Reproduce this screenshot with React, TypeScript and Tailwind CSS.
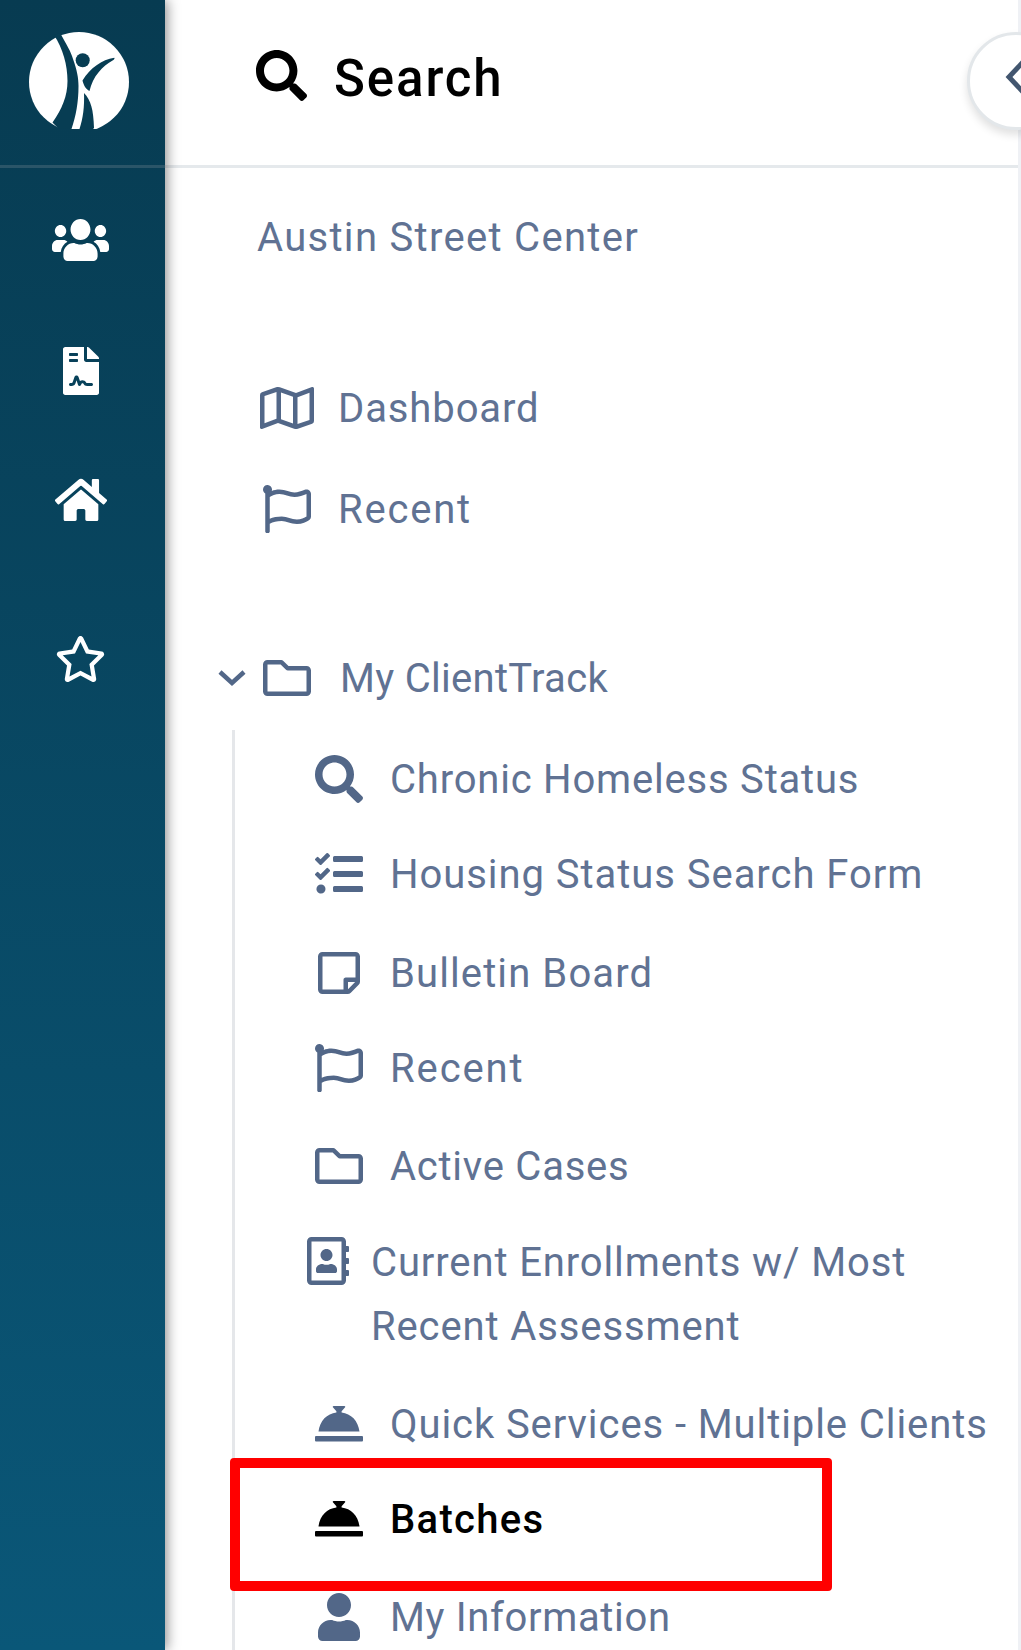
import type { ComponentType } from 'react'
import {
  FaFileContract,
  FaHome,
  FaRegAddressBook,
  FaRegFlag,
  FaRegFolder,
  FaRegMap,
  FaRegStar,
  FaRegStickyNote,
  FaSearch,
  FaTasks,
  FaUser,
  FaUsers,
} from 'react-icons/fa'

type IconProps = { className?: string }

type NavItem = {
  label: string
  icon: ComponentType<IconProps>
  iconClass: string
  gap: string
  textClass: string
  active?: boolean
}

function Bell({ className }: IconProps) {
  return (
    <svg className={className} viewBox="0 0 48 36" fill="currentColor">
      <path d="M18.5 0h11a.8.8 0 0 1 .6 1.3L26.6 5.2v1.2C36 7.5 43.2 14.5 44.5 25.5h-41C4.8 14.5 12 7.5 21.4 6.4V5.2L17.9 1.3a.8.8 0 0 1 .6-1.3z" />
      <rect x="0" y="30" width="48" height="5.5" rx="1" />
    </svg>
  )
}

function Logo() {
  return (
    <svg className="h-[97px] w-[100px]" viewBox="0 0 100 97">
      <circle cx="50" cy="50" r="50" fill="#fff" />
      <g fill="#073d53">
        <path d="M25 3L31 1C38 13 42 20 44 27C48 38 49.5 46 49.5 54C49.5 70 47 84 42.5 97L30 97L23.5 90.5C33 77 38.5 64 38.5 49C38.5 33 34 17 25 3Z" />
        <circle cx="53.7" cy="28.3" r="7" />
        <path d="M53.5 48.5C61 36 73 27.5 85.3 25.7C86 26.5 85 27.5 84 28.2C73 34.5 64 44 60.5 59C57 57.5 54.5 53 53.5 48.5Z" />
        <path d="M55 61C62 68 64.5 78 65 96L64 97H50.5C54 86 55.5 75 55 61Z" />
      </g>
    </svg>
  )
}

const topItems: NavItem[] = [
  { label: 'Dashboard', icon: FaRegMap, iconClass: 'w-[54px]', gap: '', textClass: 'tracking-[0.9px]' },
  { label: 'Recent', icon: FaRegFlag, iconClass: 'w-12', gap: 'mt-[37px]', textClass: 'tracking-[1.8px]' },
]

const treeItems: NavItem[] = [
  { label: 'Chronic Homeless Status', icon: FaSearch, iconClass: 'w-12', gap: 'mt-[18px]', textClass: 'tracking-[0.8px]' },
  { label: 'Housing Status Search Form', icon: FaTasks, iconClass: 'w-12', gap: 'mt-[31px]', textClass: 'tracking-[0.95px]' },
  { label: 'Bulletin Board', icon: FaRegStickyNote, iconClass: 'w-[42px]', gap: 'mt-[35px]', textClass: 'tracking-[1.1px]' },
  { label: 'Recent', icon: FaRegFlag, iconClass: 'w-12', gap: 'mt-[31px]', textClass: 'tracking-[1.9px]' },
  { label: 'Active Cases', icon: FaRegFolder, iconClass: 'w-12', gap: 'mt-[34px]', textClass: 'tracking-[0.75px]' },
]

const serviceItems: NavItem[] = [
  { label: 'Quick Services - Multiple Clients', icon: Bell, iconClass: 'w-12', gap: 'mt-[34px]', textClass: 'tracking-[0.92px]' },
  { label: 'Batches', icon: Bell, iconClass: 'w-12', gap: 'mt-[31px]', textClass: 'tracking-[1.3px]', active: true },
  { label: 'My Information', icon: FaUser, iconClass: 'w-[42px]', gap: 'mt-[34px]', textClass: 'tracking-[0.65px]' },
]

function NavRow({ item }: { item: NavItem }) {
  const Icon = item.icon
  return (
    <a className={`flex h-16 items-center whitespace-nowrap ${item.gap} ${item.active ? 'font-medium text-black' : ''}`}>
      <span className={`mr-[22px] flex w-[58px] justify-center pb-[3px] ${item.active ? '' : 'text-[#526788]'}`}>
        <Icon className={`h-12 ${item.iconClass}`} />
      </span>
      <span className={item.textClass}>{item.label}</span>
    </a>
  )
}

export default function App() {
  return (
    <div className="relative flex h-[1650px] w-[1021px] overflow-hidden bg-white font-[Roboto,sans-serif] text-[40px] leading-[64px] text-[#607293]">
      <aside className="z-10 flex w-[165px] shrink-0 flex-col items-center bg-linear-to-b from-[#073b51] to-[#0a5778] text-white shadow-[2px_0_12px_rgba(0,0,0,0.45)]">
        <div className="flex h-[168px] w-full justify-center border-b-[3px] border-[#2a5568] pt-8 pr-2">
          <Logo />
        </div>
        <nav className="flex flex-col items-center pr-1">
          <FaUsers className="mt-12 h-12 w-[57px]" preserveAspectRatio="none" />
          <FaFileContract className="mt-[83px] h-12 w-9" />
          <FaHome className="mt-[81px] h-12 w-[52px]" preserveAspectRatio="none" />
          <FaRegStar className="mt-[112px] h-[46px] w-[51px]" preserveAspectRatio="none" />
        </nav>
      </aside>

      <main className="flex flex-1 flex-col border-r-[3px] border-[#eff1f5]">
        <header className="flex h-[168px] shrink-0 items-start border-b-[3px] border-[#e5e9ec] pt-[45px] pl-[91px] text-[51px] font-medium text-black">
          <FaSearch className="mt-[5px] mr-[27px] h-[51px] w-[51px]" />
          <h1 className="mt-0.5 tracking-[1.9px]">Search</h1>
        </header>

        <div className="flex flex-1 flex-col pt-[38px]">
          <p className="pl-[92px] tracking-[1.3px]">Austin Street Center</p>

          <div className="mt-[107px] -mr-px pl-[93px]">
            {topItems.map(item => <NavRow key={item.label} item={item} />)}
          </div>

          <div className="mt-[105px] flex items-center pl-[53px]">
            <svg className="mr-[17px] mb-0.5 h-[18px] w-[28px]" viewBox="0 0 28 18" fill="none" stroke="#526788" strokeWidth="4.5">
              <path d="M2 3l12 11L26 3" />
            </svg>
            <FaRegFolder className="mr-[29px] mb-[3px] h-12 w-12 text-[#526788]" />
            <span className="tracking-[0.3px]">My ClientTrack</span>
          </div>

          <div className="mt-[19px] ml-[67px] flex-1 border-l-[3px] border-[#e5e7ea] pl-[75px]">
            {treeItems.map(item => <NavRow key={item.label} item={item} />)}
            <a className="mt-8 -ml-[3px] flex items-start">
              <FaRegAddressBook className="mt-[6px] mr-[22px] h-12 w-[42px] text-[#526788]" />
              <span className="tracking-[0.88px] whitespace-nowrap">
                Current Enrollments w/ Most
                <br />
                Recent Assessment
              </span>
            </a>
            {serviceItems.map(item => <NavRow key={item.label} item={item} />)}
          </div>
        </div>
      </main>

      <button className="absolute top-8 left-[967px] flex h-[98px] w-[98px] items-center rounded-full border-[3px] border-[#e3e7ea] bg-white pl-[35px] shadow-[0_5px_8px_rgba(0,0,0,0.12)]">
        <svg className="mb-2 h-9 w-5" viewBox="0 0 20 36" fill="none" stroke="#42566f" strokeWidth="5">
          <path d="M19 2L4 18l15 16" />
        </svg>
      </button>

      <div className="absolute top-[1458px] left-[230px] h-[133px] w-[602px] rounded-[4px] border-[10px] border-[#ff0000]" />
    </div>
  )
}
